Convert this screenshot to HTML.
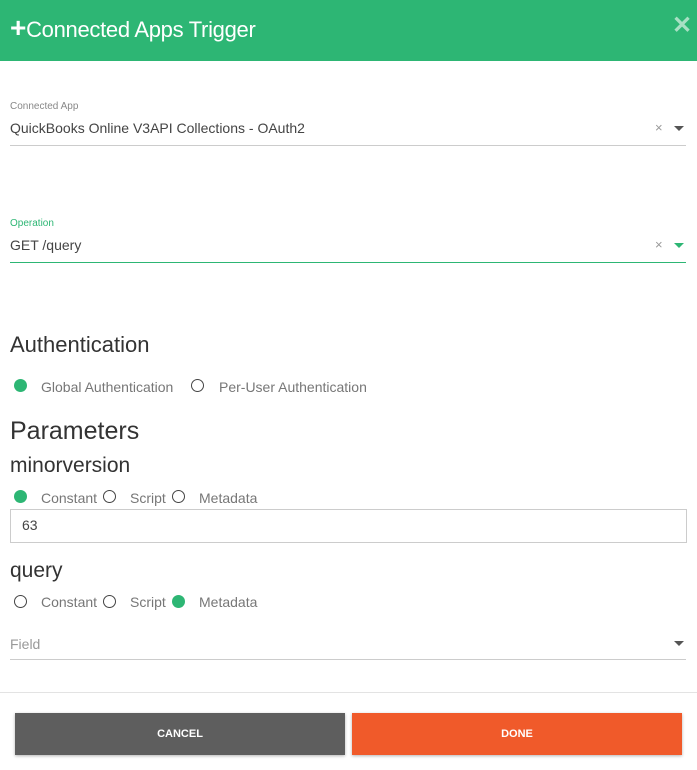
<!DOCTYPE html>
<html><head><style>
body{margin:0;width:697px;height:770px;background:#fff;font-family:"Liberation Sans",sans-serif;position:relative;overflow:hidden;color:#333}
.hdr{position:absolute;left:0;top:0;width:697px;height:61px;background:#2db674;color:#fff;font-size:22px}
.abs{position:absolute;white-space:nowrap}
.lbl{font-size:10px;color:#888}
.val{font-size:14px;color:#444}
.line{position:absolute;left:10px;width:676px;height:1px;background:#ccc}
.dot{position:absolute;width:13px;height:13px;border-radius:50%;box-sizing:border-box}
.on{background:#2db674}
.off{border:1px solid #444}
.rt{font-size:14px;color:#777}
.tri{position:absolute;width:0;height:0;border-left:5px solid transparent;border-right:5px solid transparent;border-top:5px solid #555}
.btn{position:absolute;top:713px;height:42px;color:#fff;font-size:11px;font-weight:bold;text-align:center;line-height:42px;box-shadow:0 1px 3px rgba(0,0,0,.3)}
</style></head><body>
<div class="hdr"><div class="abs" style="left:10px;top:17px;font-size:22px;letter-spacing:-0.3px"><b style="font-size:28px;line-height:22px">+</b>Connected Apps Trigger</div>
<div class="abs" style="left:672px;top:11px;font-size:24px;color:#a8e0c4;font-weight:bold">✕</div></div>
<div class="abs lbl" style="left:10px;top:101px">Connected App</div>
<div class="abs val" style="left:10px;top:120px">QuickBooks Online V3API Collections - OAuth2</div>
<div class="abs" style="left:655px;top:120px;color:#999;font-size:13px">×</div>
<div class="tri" style="left:674px;top:126px"></div>
<div class="line" style="top:145px"></div>
<div class="abs lbl" style="left:10px;top:218px;color:#2db674">Operation</div>
<div class="abs val" style="left:10px;top:237px">GET /query</div>
<div class="abs" style="left:655px;top:237px;color:#999;font-size:13px">×</div>
<div class="tri" style="left:674px;top:243px;border-top-color:#2db674"></div>
<div class="line" style="top:262px;background:#2db674"></div>
<div class="abs" style="left:10px;top:332px;font-size:22px;color:#333">Authentication</div>
<div class="dot on" style="left:14px;top:379px"></div><div class="abs rt" style="left:41px;top:379px">Global Authentication</div>
<div class="dot off" style="left:191px;top:379px"></div><div class="abs rt" style="left:219px;top:379px">Per-User Authentication</div>
<div class="abs" style="left:10px;top:417px;font-size:25px;color:#333">Parameters</div>
<div class="abs" style="left:10px;top:454px;font-size:21px;color:#333">minorversion</div>
<div class="dot on" style="left:14px;top:490px"></div><div class="abs rt" style="left:41px;top:490px">Constant</div>
<div class="dot off" style="left:103px;top:490px"></div><div class="abs rt" style="left:130px;top:490px">Script</div>
<div class="dot off" style="left:172px;top:490px"></div><div class="abs rt" style="left:199px;top:490px">Metadata</div>
<div class="abs" style="left:10px;top:509px;width:675px;height:32px;border:1px solid #ccc"></div>
<div class="abs val" style="left:22px;top:517px">63</div>
<div class="abs" style="left:10px;top:559px;font-size:21px;color:#333">query</div>
<div class="dot off" style="left:14px;top:595px"></div><div class="abs rt" style="left:41px;top:594px">Constant</div>
<div class="dot off" style="left:103px;top:595px"></div><div class="abs rt" style="left:130px;top:594px">Script</div>
<div class="dot on" style="left:172px;top:595px"></div><div class="abs rt" style="left:199px;top:594px">Metadata</div>
<div class="abs" style="left:10px;top:636px;font-size:14px;color:#999">Field</div>
<div class="tri" style="left:674px;top:641px"></div>
<div class="line" style="top:659px"></div>
<div class="abs" style="left:0;top:692px;width:697px;height:1px;background:#e3e3e3"></div>
<div class="btn" style="left:15px;width:330px;background:#5e5e5e">CANCEL</div>
<div class="btn" style="left:352px;width:330px;background:#f05a2a">DONE</div>
</body></html>
